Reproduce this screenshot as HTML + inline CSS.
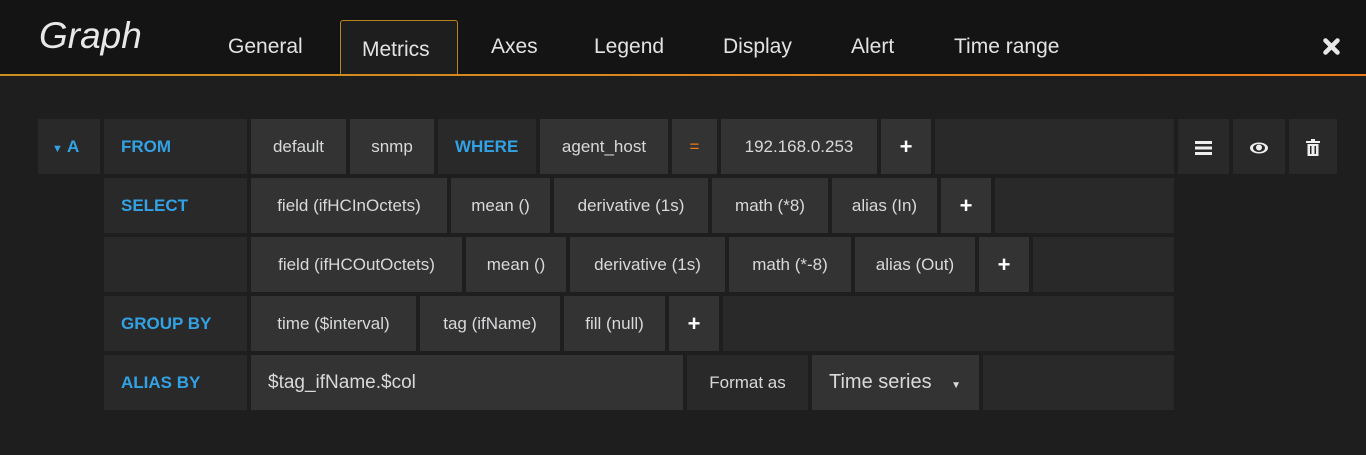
<!DOCTYPE html>
<html><head><style>
body{margin:0;width:1366px;height:455px;background:#1f1e1f;font-family:"Liberation Sans",sans-serif;overflow:hidden;position:relative;color:#d8d9da}
.hdr{position:absolute;left:0;top:0;width:1366px;height:75px;background:#141414}
.line{position:absolute;left:0;top:74px;width:1366px;height:2px;background:linear-gradient(90deg,#c9901f,#eb7b18)}
.title{position:absolute;left:39px;top:15px;font-size:37px;font-style:italic;color:#e8e8e8}
.tab{position:absolute;top:35px;font-size:21px;color:#e3e3e3}
.act{position:absolute;left:340px;top:20px;width:118px;height:56px;border:1px solid #b8841f;border-bottom:none;border-radius:3px 3px 0 0;background:#1f1e1f;box-sizing:border-box}
.c{position:absolute;height:55px;background:#333;font-size:17px;line-height:55px;text-align:center;color:#d8d9da;white-space:nowrap}
.l{background:#292929;color:#33a2e5;font-weight:bold;text-align:left;padding-left:17px;box-sizing:border-box}
.f{background:#292929}
.p{font-weight:bold;font-size:22px;color:#fff}
svg{vertical-align:middle}
</style></head><body>
<div class="hdr"></div>
<div class="act"></div>
<div class="line"></div>
<div class="title">Graph</div>
<div class="tab" style="left:228px">General</div>
<div class="tab" style="left:362px;top:38px">Metrics</div>
<div class="tab" style="left:491px">Axes</div>
<div class="tab" style="left:594px">Legend</div>
<div class="tab" style="left:723px">Display</div>
<div class="tab" style="left:851px">Alert</div>
<div class="tab" style="left:954px">Time range</div>
<svg style="position:absolute;left:1323px;top:38px" width="17" height="17" viewBox="0 0 17 17"><path d="M2.5 2.5L14.5 14.5M14.5 2.5L2.5 14.5" stroke="#e8e8e8" stroke-width="4.5" stroke-linecap="round"/></svg>

<div class="c l" style="left:38px;top:119px;width:62px;padding-left:14px"><span style="font-size:11px">▼</span> A</div>
<div class="c l" style="left:104px;top:119px;width:143px">FROM</div>
<div class="c" style="left:251px;top:119px;width:95px">default</div>
<div class="c" style="left:350px;top:119px;width:84px">snmp</div>
<div class="c l" style="left:438px;top:119px;width:98px">WHERE</div>
<div class="c" style="left:540px;top:119px;width:128px">agent_host</div>
<div class="c" style="left:672px;top:119px;width:45px;color:#eb7b18">=</div>
<div class="c" style="left:721px;top:119px;width:156px">192.168.0.253</div>
<div class="c p" style="left:881px;top:119px;width:50px">+</div>
<div class="c f" style="left:935px;top:119px;width:239px"></div>
<div class="c f" style="left:1178px;top:119px;width:51px"><svg width="17" height="14" viewBox="0 0 17 14"><rect y="0" width="17" height="3" fill="#eee"/><rect y="5.5" width="17" height="3" fill="#eee"/><rect y="11" width="17" height="3" fill="#eee"/></svg></div>
<div class="c f" style="left:1233px;top:119px;width:52px"><svg width="20" height="14" viewBox="0 0 20 14"><ellipse cx="10" cy="7" rx="9" ry="5.5" fill="#eee"/><ellipse cx="10" cy="7" rx="6" ry="4" fill="#292929"/><circle cx="10" cy="6.5" r="3" fill="#eee"/></svg></div>
<div class="c f" style="left:1289px;top:119px;width:48px"><svg width="14" height="17" viewBox="0 0 14 17"><rect x="0" y="2" width="14" height="2" fill="#eee"/><rect x="5" y="0" width="4" height="2" fill="#eee"/><rect x="1.5" y="5" width="11" height="12" fill="#eee"/><rect x="4" y="7" width="1.5" height="8" fill="#292929"/><rect x="8.5" y="7" width="1.5" height="8" fill="#292929"/></svg></div>

<div class="c l" style="left:104px;top:178px;width:143px">SELECT</div>
<div class="c" style="left:251px;top:178px;width:196px">field (ifHCInOctets)</div>
<div class="c" style="left:451px;top:178px;width:99px">mean ()</div>
<div class="c" style="left:554px;top:178px;width:154px">derivative (1s)</div>
<div class="c" style="left:712px;top:178px;width:116px">math (*8)</div>
<div class="c" style="left:832px;top:178px;width:105px">alias (In)</div>
<div class="c p" style="left:941px;top:178px;width:50px">+</div>
<div class="c f" style="left:995px;top:178px;width:179px"></div>

<div class="c f" style="left:104px;top:237px;width:143px"></div>
<div class="c" style="left:251px;top:237px;width:211px">field (ifHCOutOctets)</div>
<div class="c" style="left:466px;top:237px;width:100px">mean ()</div>
<div class="c" style="left:570px;top:237px;width:155px">derivative (1s)</div>
<div class="c" style="left:729px;top:237px;width:122px">math (*-8)</div>
<div class="c" style="left:855px;top:237px;width:120px">alias (Out)</div>
<div class="c p" style="left:979px;top:237px;width:50px">+</div>
<div class="c f" style="left:1033px;top:237px;width:141px"></div>

<div class="c l" style="left:104px;top:296px;width:143px">GROUP BY</div>
<div class="c" style="left:251px;top:296px;width:165px">time ($interval)</div>
<div class="c" style="left:420px;top:296px;width:140px">tag (ifName)</div>
<div class="c" style="left:564px;top:296px;width:101px">fill (null)</div>
<div class="c p" style="left:669px;top:296px;width:50px">+</div>
<div class="c f" style="left:723px;top:296px;width:451px"></div>

<div class="c l" style="left:104px;top:355px;width:143px">ALIAS BY</div>
<div class="c" style="left:251px;top:355px;width:432px;text-align:left;padding-left:17px;box-sizing:border-box;font-size:19px">$tag_ifName.$col</div>
<div class="c f" style="left:687px;top:355px;width:121px">Format as</div>
<div class="c" style="left:812px;top:355px;width:167px;text-align:left;padding-left:17px;box-sizing:border-box;font-size:20px">Time series <span style="font-size:10px;margin-left:14px">▼</span></div>
<div class="c f" style="left:983px;top:355px;width:191px"></div>
</body></html>
